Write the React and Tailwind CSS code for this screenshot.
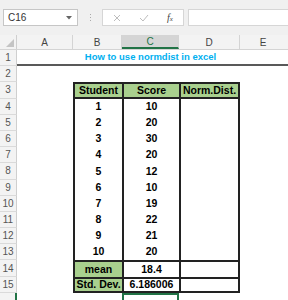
import React from 'react';

const data = [
  [1, 10], [2, 20], [3, 30], [4, 20], [5, 12],
  [6, 10], [7, 19], [8, 22], [9, 21], [10, 20],
];

function RowHead({ n, active }) {
  return (
    <div
      className={
        'w-[17px] shrink-0 h-full bg-[#f3f3f3] border-b border-[#dadada] flex items-center justify-center text-[10px] ' +
        (active ? 'border-r-2 border-r-[#217346] text-[#217346]' : 'border-r border-r-[#cfcfcf] text-[#555]')
      }
    >
      {n}
    </div>
  );
}

function Row({ n, children }) {
  return (
    <div className="flex h-[16.2px]">
      <RowHead n={n} />
      {children}
    </div>
  );
}

function TableRow({ n, b, c, green, top, bottom }) {
  const t = top ? ' border-t-2' : '';
  const bt = bottom ? ' border-b-2' : '';
  return (
    <Row n={n}>
      <div className="w-[56px] shrink-0" />
      <div
        className={
          'w-[49px] shrink-0 border-l-2 border-[#222] flex items-center justify-center font-bold text-[10.5px] text-black' +
          t + bt + (green ? ' bg-[#a9d08e]' : '')
        }
      >
        {b}
      </div>
      <div
        className={
          'w-[57px] shrink-0 border-l-2 border-[#222] flex items-center justify-center font-bold text-[10.5px] text-black' +
          t + bt + (n === 3 ? ' bg-[#a9d08e]' : '')
        }
      >
        {c}
      </div>
      <div
        className={
          'w-[61px] shrink-0 border-l-2 border-r-2 border-[#222] flex items-center justify-center font-bold text-[10.5px] text-black' +
          t + bt + (n === 3 ? ' bg-[#a9d08e]' : '')
        }
      >
        {n === 3 ? 'Norm.Dist.' : ''}
      </div>
      <div className="flex-1" />
    </Row>
  );
}

export default function App() {
  return (
    <div className="w-[288px] h-[300px] overflow-hidden bg-white font-['Liberation_Sans',Arial,sans-serif]">
      {/* formula bar */}
      <div className="h-[35px] bg-[#f0f0f0] flex items-start pt-[9px]">
        <div className="ml-[3px] w-[75px] h-[17px] bg-white border border-[#c6c6c6] flex items-center justify-between pl-[4px] pr-[5px]">
          <span className="text-[10px] text-[#333]">C16</span>
          <svg width="6" height="4" viewBox="0 0 6 4">
            <path d="M0 0h6L3 3.5z" fill="#666" />
          </svg>
        </div>
        <div className="w-[24px] h-[17px] flex flex-col items-center justify-center gap-[2px]">
          <span className="w-[1px] h-[1px] bg-[#aaa]" />
          <span className="w-[1px] h-[1px] bg-[#aaa]" />
          <span className="w-[1px] h-[1px] bg-[#aaa]" />
        </div>
        <div className="w-[82px] h-[17px] bg-white border border-[#d6d6d6] flex items-center">
          <svg className="ml-[10px]" width="8" height="8" viewBox="0 0 8 8">
            <path d="M1 1l6 6M7 1L1 7" stroke="#bdbdbd" strokeWidth="1" />
          </svg>
          <svg className="ml-[18px]" width="10" height="8" viewBox="0 0 10 8">
            <path d="M1 4l3 3 5-6" stroke="#bdbdbd" strokeWidth="1" fill="none" />
          </svg>
          <span className="ml-[18px] text-[10px] italic text-[#444] font-['Liberation_Serif',serif]">
            f<span className="text-[7px]">x</span>
          </span>
        </div>
        <div className="ml-[4px] flex-1 h-[17px] bg-white border border-r-0 border-[#d6d6d6]" />
      </div>

      {/* column headers */}
      <div className="flex h-[15px] bg-[#f3f3f3] border-b border-[#d4d4d4] text-[10px] text-[#444]">
        <div className="w-[17px] shrink-0 border-r border-[#cfcfcf] flex items-end justify-end p-[2px]">
          <svg width="8" height="8" viewBox="0 0 8 8">
            <path d="M8 0v8H0z" fill="#c4c4c4" />
          </svg>
        </div>
        <div className="w-[56px] shrink-0 border-r border-[#d4d4d4] flex items-center justify-center">A</div>
        <div className="w-[49px] shrink-0 border-r border-[#d4d4d4] flex items-center justify-center">B</div>
        <div className="w-[57px] shrink-0 border-r border-[#d4d4d4] bg-[#d5d5d5] border-b-2 border-b-[#217346] text-[#217346] flex items-center justify-center">C</div>
        <div className="w-[61px] shrink-0 border-r border-[#d4d4d4] flex items-center justify-center">D</div>
        <div className="flex-1 flex items-center justify-center pr-[2px]">E</div>
      </div>

      {/* row 1 title */}
      <Row n={1}>
        <div className="flex-1 border-b-2 border-[#595959] flex items-center justify-center pr-[4px] font-bold text-[9.5px] text-[#00b0f0]">
          How to use normdist in excel
        </div>
      </Row>
      <Row n={2}>
        <div className="flex-1" />
      </Row>
      <TableRow n={3} b="Student" c="Score" green top bottom />
      {data.map(([s, v], i) => (
        <TableRow key={s} n={i + 4} b={s} c={v} />
      ))}
      <TableRow n={14} b="mean" c="18.4" green top />
      <TableRow n={15} b="Std. Dev." c="6.186006" green top bottom />

      {/* row 16 with active cell, only its top edge is in view */}
      <div className="flex h-[16.2px]">
        <RowHead n="" active />
        <div className="w-[56px] shrink-0" />
        <div className="w-[49px] shrink-0" />
        <div className="w-[57px] shrink-0 border-2 border-[#217346]" />
        <div className="flex-1" />
      </div>
    </div>
  );
}
